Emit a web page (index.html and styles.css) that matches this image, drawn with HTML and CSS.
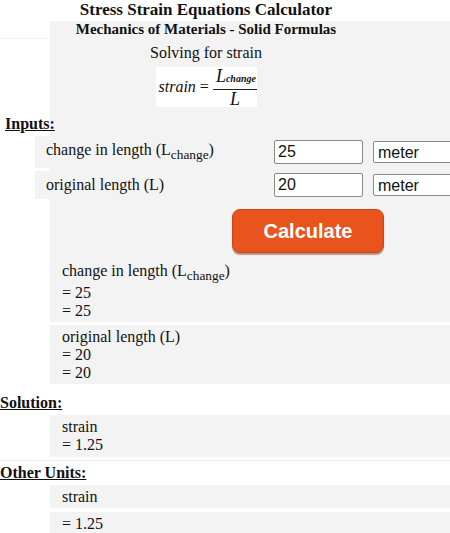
FILE: index.html
```html
<!DOCTYPE html>
<html lang="en">
<head>
<meta charset="utf-8">
<title>Stress Strain Equations Calculator</title>
<link rel="stylesheet" href="styles.css">
</head>
<body>
<h1 class="title">Stress Strain Equations Calculator</h1>
<div class="panel">
  <div class="center">
    <h2 class="subtitle">Mechanics of Materials - Solid Formulas</h2>
    <div class="solving">Solving for strain</div>
    <div class="formula">
      <span class="f-lhs">strain</span><span class="f-eq">=</span>
      <span class="frac"><span class="f-num">L<span class="f-sub">change</span></span><span class="f-den">L</span></span>
    </div>
  </div>
  <h3 class="section-head inputs-head">Inputs:</h3>
  <div class="input-row">
    <div class="label">change in length (L<sub>change</sub>)</div>
    <input class="num-input" type="text" value="25">
    <div class="unit-wrap"><select class="unit"><option>meter</option></select></div>
  </div>
  <div class="input-row">
    <div class="label">original length (L)</div>
    <input class="num-input" type="text" value="20">
    <div class="unit-wrap"><select class="unit"><option>meter</option></select></div>
  </div>
  <button class="calc" type="button">Calculate</button>
  <div class="result result-first">change in length (L<sub>change</sub>)<br>= 25<br>= 25</div>
</div>
<div class="result">original length (L)<br>= 20<br>= 20</div>
<h3 class="section-head solution-head">Solution:</h3>
<div class="result result-solution">strain<br>= 1.25</div>
<h3 class="section-head other-head">Other Units:</h3>
<div class="result result-unit">strain</div>
<div class="result result-unit">= 1.25</div>
</body>
</html>
```
FILE: styles.css
```css
html, body {
  margin: 0;
  padding: 0;
  background: #fff;
}
body {
  overflow: hidden;
  font-family: "Liberation Serif", "Times New Roman", serif;
  font-size: 16px;
  color: #111;
}
.title {
  width: 412px;
  margin: 0 0 5px;
  font-size: 17px;
  line-height: 20px;
  font-weight: bold;
  text-align: center;
}
.panel {
  position: relative;
  margin-left: 50px;
  background: #f3f3f3;
}
.panel::before {
  content: "";
  position: absolute;
  left: -50px;
  top: 17px;
  width: 50px;
  height: 1px;
  background: #f0f0f0;
}
.center {
  width: 312px;
  text-align: center;
}
.subtitle {
  margin: -4px 0 0;
  font-size: 15px;
  font-weight: bold;
}
.solving {
  margin-top: 6px;
}
.formula {
  display: flex;
  align-items: center;
  width: 101px;
  height: 40px;
  margin: 5px auto 0;
  padding-left: 3px;
  box-sizing: border-box;
  background: #fff;
  font-style: italic;
  font-size: 16px;
}
.f-eq {
  margin: 0 4px 0 4px;
  font-style: normal;
}
.frac {
  display: flex;
  flex-direction: column;
  align-items: center;
}
.f-num {
  padding: 0 1px 1px 3px;
  border-bottom: 1px solid #222;
  font-size: 18px;
  line-height: 18px;
}
.f-sub {
  font-size: 10px;
  font-weight: bold;
}
.f-den {
  font-size: 18px;
  line-height: 18px;
}
.section-head {
  margin: 0;
  font-size: 16px;
  font-weight: bold;
  text-decoration: underline;
}
.inputs-head {
  margin: 8px 0 2px -45px;
}
.input-row {
  display: flex;
  align-items: center;
  margin-top: 3px;
}
.label {
  flex: none;
  width: 239px;
  margin-left: -15px;
  padding: 5px 11px;
  box-sizing: border-box;
  background: #f3f3f3;
}
.num-input {
  flex: none;
  width: 89px;
  height: 24px;
  box-sizing: border-box;
  margin: 0 10px 0 0;
  padding: 0 3px;
  border: 1px solid #8a8a8a;
  border-radius: 2px;
  background: #fff;
  font-family: "Liberation Sans", Arial, sans-serif;
  font-size: 16px;
  color: #111;
}
.unit-wrap {
  flex: 1;
  min-width: 0;
  overflow: hidden;
  display: flex;
}
.unit {
  flex: none;
  width: 120px;
  height: 22px;
  box-sizing: border-box;
  margin: 0;
  padding: 0 4px;
  border: 1px solid #8a8a8a;
  border-radius: 2px;
  background: #fff;
  appearance: none;
  -webkit-appearance: none;
  font-family: "Liberation Sans", Arial, sans-serif;
  font-size: 16px;
  color: #111;
}
.calc {
  display: block;
  width: 152px;
  height: 44px;
  margin: 10px 0 0 182px;
  padding: 0;
  border: 1px solid #c4461a;
  border-radius: 8px;
  background: #e9541d;
  box-shadow: 0 2px 1px rgba(120, 40, 10, 0.45);
  color: #fff;
  font-family: "Liberation Sans", Arial, sans-serif;
  font-size: 20px;
  font-weight: bold;
}
.result {
  margin: 3px 0 0 50px;
  padding: 3px 12px 2px;
  background: #f3f3f3;
}
.result-first {
  margin: 5px 0 0;
  padding-top: 4px;
}
.solution-head {
  margin: 10px 0 2px;
}
.result-solution {
  padding: 3px 12px 3px;
}
.other-head {
  margin-top: 3px;
  padding-top: 3px;
  border-top: 1px solid #eeeeee;
  margin-bottom: 3px;
}
.result-unit {
  margin-top: 4px;
}
.other-head + .result-unit {
  margin-top: 0;
}
```
